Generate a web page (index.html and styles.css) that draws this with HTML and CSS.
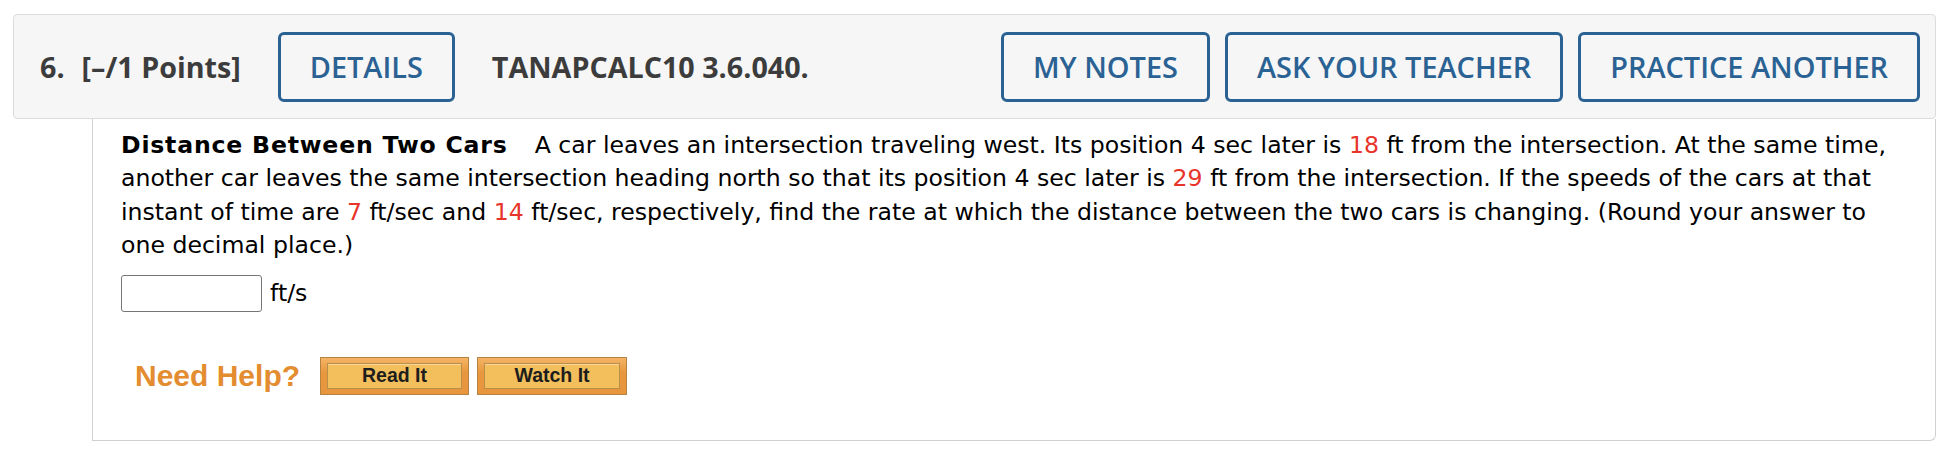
FILE: index.html
```html
<!DOCTYPE html>
<html>
<head>
<meta charset="utf-8">
<link rel="stylesheet" href="styles.css">
</head>
<body>
<div class="question">
  <div class="q-header">
    <span class="q-num">6.</span>
    <span class="q-points">[–/1 Points]</span>
    <button class="q-btn q-details">DETAILS</button>
    <span class="q-code">TANAPCALC10 3.6.040.</span>
    <div class="q-actions">
      <button class="q-btn">MY NOTES</button>
      <button class="q-btn">ASK YOUR TEACHER</button>
      <button class="q-btn">PRACTICE ANOTHER</button>
    </div>
  </div>
  <div class="q-body">
    <p class="q-text"><b class="q-title">Distance Between Two Cars</b>A car leaves an intersection traveling west. Its position 4 sec later is <span class="red">18</span> ft from the intersection. At the same time, another car leaves the same intersection heading north so that its position 4 sec later is <span class="red">29</span> ft from the intersection. If the speeds of the cars at that instant of time are <span class="red">7</span> ft/sec and <span class="red">14</span> ft/sec, respectively, find the rate at which the distance between the two cars is changing. (Round your answer to one decimal place.)</p>
    <div class="answer-row">
      <input class="answer" type="text">
      <span class="unit">ft/s</span>
    </div>
    <div class="help-row">
      <span class="need-help">Need Help?</span>
      <span class="help-btn"><span class="help-inner">Read It</span></span>
      <span class="help-btn"><span class="help-inner">Watch It</span></span>
    </div>
  </div>
</div>
</body>
</html>
```
FILE: styles.css
```css
html, body {
  margin: 0;
  padding: 0;
  background: #fff;
}

.question {
  padding: 14px 8px 0 13px;
}

.q-header {
  display: flex;
  align-items: center;
  height: 103px;
  background: #f6f6f6;
  border: 1px solid #dcdcdc;
  border-radius: 4px;
  padding: 0 15px 0 26px;
  font-family: "Open Sans", sans-serif;
  color: #3c3c3c;
}

.q-num,
.q-points,
.q-code {
  font-weight: 700;
  font-size: 28.7px;
}

.q-num {
  margin-right: 17px;
}

.q-points {
  margin-right: 37px;
}

.q-code {
  margin-left: 37px;
}

.q-btn {
  box-sizing: border-box;
  height: 70px;
  padding: 0 29px;
  background: transparent;
  border: 3px solid #2b6294;
  border-radius: 6px;
  color: #2b6294;
  font-family: "Open Sans", sans-serif;
  font-weight: 600;
  font-size: 28.9px;
}

.q-actions {
  margin-left: auto;
  display: flex;
  gap: 15px;
}

.q-body {
  margin-left: 79px;
  border: 1px solid #d0d0d0;
  border-top: none;
  border-radius: 0 0 6px 0;
  padding: 10px 30px 45px 28px;
  font-family: "DejaVu Sans", Verdana, sans-serif;
  color: #000;
}

.q-text {
  margin: 0;
  font-size: 23.6px;
  line-height: 33.4px;
}

.q-title {
  letter-spacing: 0.8px;
  margin-right: 27px;
}

.red {
  color: #e8352b;
}

.answer-row {
  display: flex;
  align-items: center;
  margin-top: 12px;
}

.answer {
  box-sizing: border-box;
  width: 141px;
  height: 37px;
  border: 1px solid #767676;
  border-radius: 3px;
  margin: 0 8px 0 0;
  padding: 0;
  background: #fff;
}

.unit {
  font-size: 23.6px;
}

.help-row {
  display: flex;
  align-items: center;
  margin-top: 45px;
  padding-left: 14px;
  font-family: "Liberation Sans", Arial, sans-serif;
}

.need-help {
  font-weight: 700;
  font-size: 30px;
  color: #e38c30;
  margin-right: 20px;
}

.help-btn {
  box-sizing: border-box;
  display: flex;
  width: 149px;
  height: 38px;
  padding: 5px 6px;
  margin-right: 8px;
  background: linear-gradient(#f4b465, #e8973e 40%, #e8963d);
  border: 1px solid #b4833f;
}

.help-btn + .help-btn {
  width: 150px;
}

.help-inner {
  flex: 1;
  display: flex;
  align-items: center;
  justify-content: center;
  background: #f2bf5c;
  border: 1px solid #b98f4c;
  box-shadow: inset 0 1px 0 #f8d59a;
  font-weight: 700;
  font-size: 19.5px;
  color: #1d1d1d;
}
```
